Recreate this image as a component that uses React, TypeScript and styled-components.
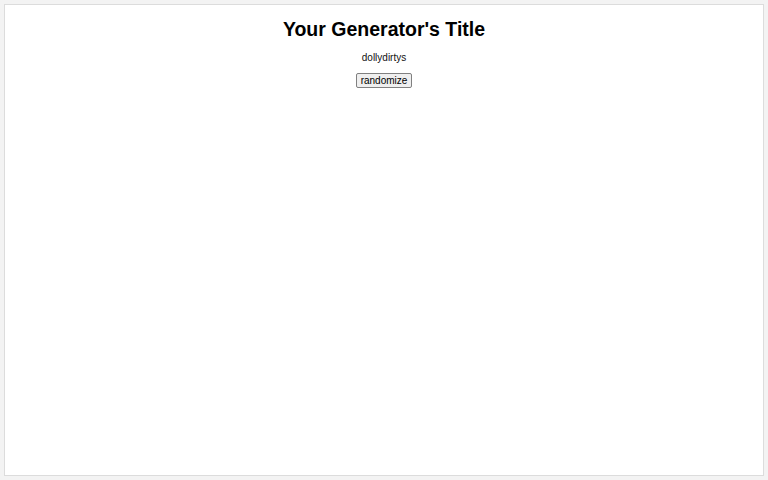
import React, { useState } from 'react';
import styled, { createGlobalStyle } from 'styled-components';

const GlobalStyle = createGlobalStyle`
  html, body {
    margin: 0;
    padding: 0;
    height: 100%;
    background-color: #f3f3f3;
  }
  #root {
    height: 100%;
  }
`;

const Page = styled.div`
  box-sizing: border-box;
  height: 100vh;
  padding: 4px;
`;

const Panel = styled.div`
  box-sizing: border-box;
  height: 100%;
  background-color: #ffffff;
  border: 1px solid #dcdcdc;
  font-family: 'Liberation Sans', Arial, sans-serif;
  text-align: center;
  padding-top: 13px;
`;

const Title = styled.h1`
  margin: 0;
  font-size: 19.5px;
  font-weight: bold;
  color: #000;
  line-height: 23px;
`;

const Output = styled.p`
  margin: 11px 0 0;
  font-size: 10px;
  line-height: 12px;
  color: #111;
`;

const Button = styled.button`
  margin-top: 9px;
  font-family: 'Liberation Sans', Arial, sans-serif;
  font-size: 10px;
  line-height: 11px;
  padding: 1px 4px;
  color: #000;
  background-color: #efefef;
  border: 1px solid #808080;
  border-radius: 2px;
  cursor: pointer;

  &:hover {
    background-color: #e5e5e5;
  }
`;

const names = ['dollydirtys', 'sunnysprouts', 'mossybeans', 'pepperpots', 'lunalaces'];

export default function App() {
  const [name, setName] = useState(names[0]);

  const randomize = () => {
    setName(names[Math.floor(Math.random() * names.length)]);
  };

  return (
    <>
      <GlobalStyle />
      <Page>
        <Panel>
          <Title>Your Generator's Title</Title>
          <Output>{name}</Output>
          <Button onClick={randomize}>randomize</Button>
        </Panel>
      </Page>
    </>
  );
}
